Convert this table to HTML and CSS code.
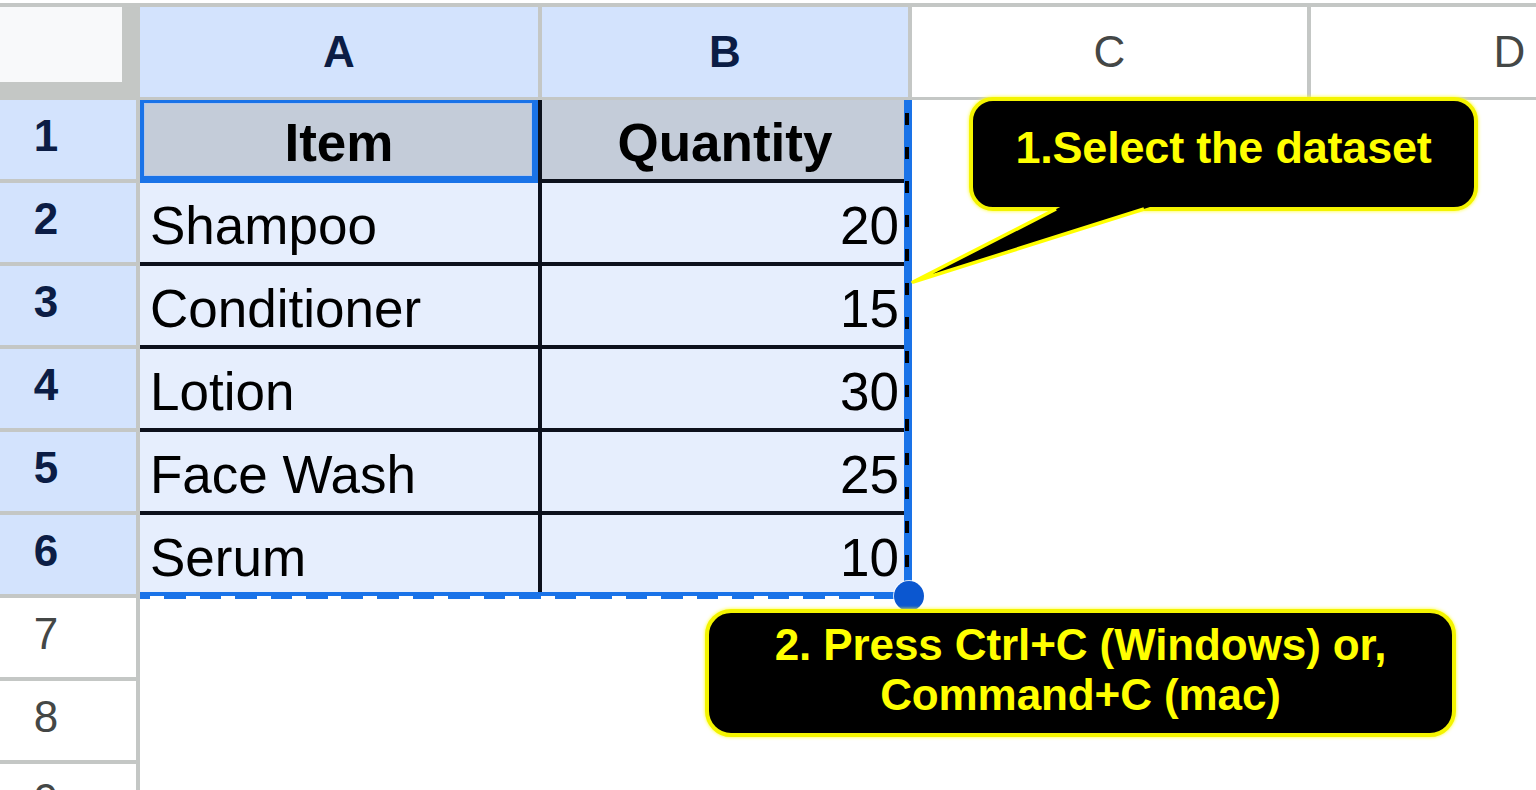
FILE: index.html
```html
<!DOCTYPE html>
<html lang="en">
<head>
<meta charset="utf-8">
<title>Copy dataset</title>
<link rel="stylesheet" href="styles.css">
</head>
<body>
<div class="sheet">
  <div class="corner"><div class="corner-box"></div></div>
  <div class="col-headers">
    <div class="ch col-a sel">A</div>
    <div class="ch col-b sel">B</div>
    <div class="ch col-c">C</div>
    <div class="ch col-d">D</div>
  </div>
  <div class="row-headers">
    <div class="rh sel">1</div>
    <div class="rh sel">2</div>
    <div class="rh sel">3</div>
    <div class="rh sel">4</div>
    <div class="rh sel">5</div>
    <div class="rh sel">6</div>
    <div class="rh">7</div>
    <div class="rh">8</div>
    <div class="rh">9</div>
  </div>
  <div class="grid-body">
    <div class="table">
      <div class="cell head">Item</div>
      <div class="cell head">Quantity</div>
      <div class="cell">Shampoo</div>
      <div class="cell num">20</div>
      <div class="cell">Conditioner</div>
      <div class="cell num">15</div>
      <div class="cell">Lotion</div>
      <div class="cell num">30</div>
      <div class="cell">Face Wash</div>
      <div class="cell num">25</div>
      <div class="cell">Serum</div>
      <div class="cell num">10</div>
    </div>
    <div class="active"></div>
    <div class="sel-right"></div>
    <div class="sel-bottom"></div>
    <div class="handle"></div>
  </div>
</div>

<div class="callout callout-1">1.Select the dataset</div>
<svg class="tail" width="280" height="100" viewBox="0 0 280 100">
  <polygon points="174,5 13,87 272,5" fill="#000"/>
  <polyline points="156,14 13,87 244,14" fill="none" stroke="#ffff00" stroke-width="3.5" stroke-linejoin="round"/>
</svg>
<div class="callout callout-2">2. Press Ctrl+C (Windows) or,<br>Command+C (mac)</div>
</body>
</html>
```

FILE: styles.css
```css
html, body {
  margin: 0;
  padding: 0;
}

body {
  width: 1536px;
  height: 790px;
  overflow: hidden;
  background: #ffffff;
  font-family: "Liberation Sans", Arial, sans-serif;
  position: relative;
}

.sheet {
  margin-top: 3px;
  height: 787px;
  box-sizing: border-box;
  padding-top: 4px;
  display: grid;
  grid-template-columns: 136px 1fr;
  grid-template-rows: 90px 1fr;
  gap: 3px 4px;
  background: #c4c7c5;
  overflow: hidden;
}

.corner {
  background: #c4c7c5;
}

.corner-box {
  width: 122px;
  height: 75px;
  background: #f8f9fa;
}

.col-headers {
  display: flex;
  gap: 4px;
  overflow: hidden;
}

.ch {
  flex: none;
  display: flex;
  align-items: center;
  justify-content: center;
  font-size: 44px;
  color: #444746;
  background: #ffffff;
}

.ch.sel {
  background: #d3e3fd;
  color: #0b1d45;
  font-weight: bold;
}

.col-a { width: 398px; }
.col-b { width: 366px; }
.col-c { width: 395px; }
.col-d { width: 397px; }

.row-headers {
  display: flex;
  flex-direction: column;
  gap: 4px;
}

.rh {
  flex: none;
  height: 79px;
  box-sizing: border-box;
  display: flex;
  align-items: center;
  justify-content: center;
  padding: 0 44px 8px 0;
  font-size: 44px;
  line-height: 44px;
  color: #444746;
  background: #ffffff;
}

.rh.sel {
  background: #d3e3fd;
  color: #0b1d45;
  font-weight: bold;
}

.grid-body {
  position: relative;
  background: #ffffff;
}

.table {
  display: grid;
  grid-template-columns: 398px 366px;
  grid-auto-rows: 79px;
  gap: 4px;
  background: #0d111c;
  width: max-content;
}

.cell {
  background: #e6eefd;
  font-size: 53px;
  line-height: 52px;
  padding: 0 10px 10px 10px;
  display: flex;
  align-items: flex-end;
  color: #000000;
  white-space: nowrap;
  overflow: hidden;
}

.cell.head {
  background: #c4ccd9;
  font-weight: bold;
  justify-content: center;
}

.cell.num {
  justify-content: flex-end;
  padding-right: 9px;
}

.active {
  position: absolute;
  left: 0;
  top: 0;
  width: 398px;
  height: 83px;
  box-sizing: border-box;
  border-style: solid;
  border-color: #1a73e8;
  border-width: 3px 6px 7px 4px;
  box-shadow: inset 0 0 0 1px #b3c7ea;
}

.sel-right {
  position: absolute;
  left: 764px;
  top: 0;
  width: 8px;
  height: 496px;
  background: #1a73e8;
}

.sel-right::before {
  content: "";
  position: absolute;
  left: 1px;
  top: 0;
  width: 4px;
  height: 100%;
  background: repeating-linear-gradient(180deg, transparent 0 13px, #000000 13px 25px, transparent 25px 34px);
}

.sel-bottom {
  position: absolute;
  left: 0;
  top: 492px;
  width: 764px;
  height: 7px;
  background:
    linear-gradient(#1a73e8, #1a73e8) 0 0 / 100% 4px no-repeat,
    repeating-linear-gradient(90deg, #1a73e8 0 10px, #ffffff 10px 24px, #1a73e8 24px 35.5px) 0 4px / 100% 3px no-repeat;
}

.handle {
  position: absolute;
  left: 754px;
  top: 481px;
  width: 30px;
  height: 30px;
  border-radius: 50%;
  background: #0b57d0;
  box-shadow: 0 0 0 1px rgba(255, 255, 255, 0.8);
}

.callout {
  position: absolute;
  box-sizing: border-box;
  background: #000000;
  border: 4px solid #f4f400;
  box-shadow: 0 0 3px 1px rgba(255, 255, 60, 0.7);
  color: #ffff00;
  font-weight: bold;
  text-align: center;
  white-space: nowrap;
}

.callout-1 {
  left: 969px;
  top: 97px;
  width: 509px;
  height: 114px;
  border-radius: 24px;
  padding-top: 24px;
  font-size: 45px;
  line-height: 45px;
  letter-spacing: -0.2px;
}

.callout-2 {
  left: 705px;
  top: 609px;
  width: 751px;
  height: 128px;
  border-radius: 26px;
  padding-top: 7px;
  font-size: 44px;
  line-height: 50px;
  letter-spacing: -0.1px;
}

.tail {
  position: absolute;
  left: 900px;
  top: 195px;
}
```
